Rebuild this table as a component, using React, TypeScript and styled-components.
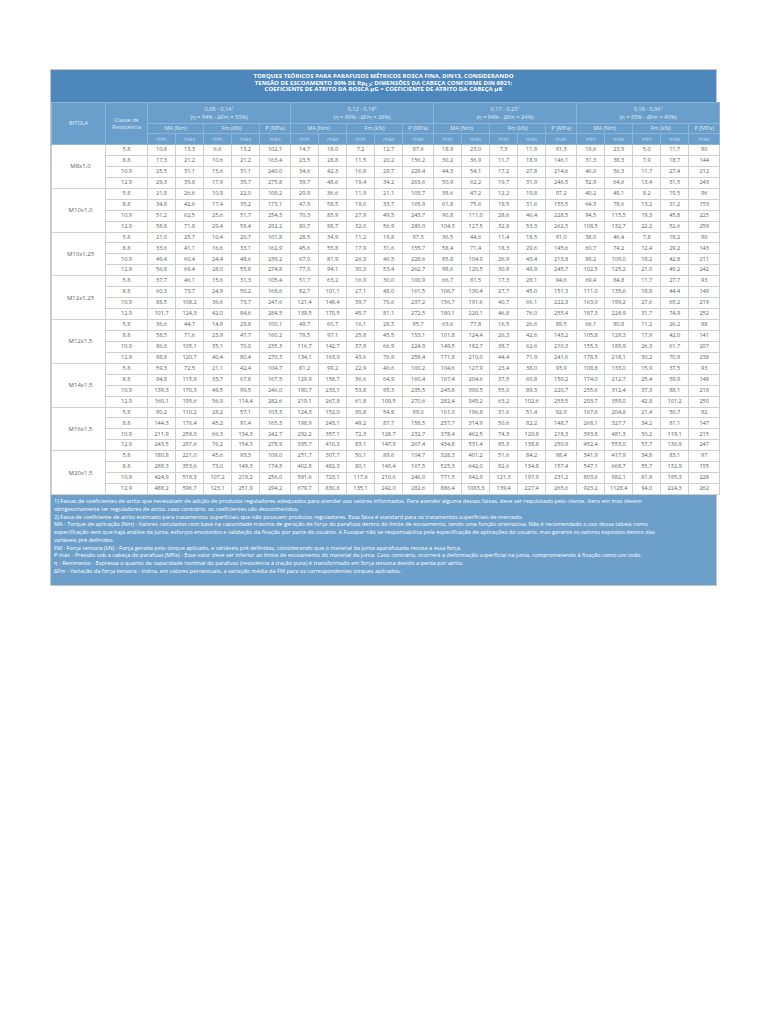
import React from 'react';
import styled, { createGlobalStyle } from 'styled-components';

const GlobalStyle = createGlobalStyle`
  html, body {
    margin: 0;
    padding: 0;
    background: #ffffff;
  }
  body {
    font-family: 'Open Sans', 'DejaVu Sans', sans-serif;
  }
`;

const Page = styled.div`
  padding: 69px 0 0 50px;
`;

const Sheet = styled.div`
  width: 667px;
  box-sizing: border-box;
  border: 1px solid #c4c7ca;
`;

const Title = styled.div`
  background: #4d87bb;
  color: #ffffff;
  font-weight: 700;
  font-size: 6px;
  line-height: 6.7px;
  text-align: center;
  height: 32px;
  box-sizing: border-box;
  padding-top: 3px;
  letter-spacing: 0.05px;

  sub {
    font-size: 4px;
    vertical-align: -1px;
    line-height: 0;
  }
`;

const Table = styled.table`
  width: 100%;
  border-collapse: collapse;
  table-layout: fixed;
`;

const Col = styled.col<{ $w: number }>`
  width: ${(p) => p.$w}px;
`;

const HeadRow = styled.tr<{ $h: number }>`
  height: ${(p) => p.$h}px;
`;

const Th = styled.th<{ $dim?: boolean }>`
  background: #6b9fcb;
  color: ${(p) => (p.$dim ? '#c9dcee' : '#dfeaf4')};
  font-weight: 400;
  font-size: 5.6px;
  line-height: 1.1;
  padding: 0;
  text-align: center;
  vertical-align: middle;
  border: 1px solid #8db6da;
  white-space: nowrap;
`;

const GroupHead = styled(Th)`
  line-height: 8px;

  sup {
    font-size: 4px;
    vertical-align: 2px;
    line-height: 0;
  }
`;

const BodyRow = styled.tr`
  height: 10.94px;
`;

const Td = styled.td`
  font-size: 5.6px;
  color: #5c5c5c;
  padding: 0;
  line-height: 1;
  text-align: center;
  vertical-align: middle;
  border: 1px solid #cfcfcf;
  white-space: nowrap;
  background: #ffffff;
`;

const SizeCell = styled(Td)`
  font-size: 6px;
  color: #606060;
  padding-left: 4px;
`;

const Notes = styled.div`
  background: #6c9fca;
  color: #ffffff;
  font-size: 5.6px;
  line-height: 7.75px;
  padding: 3px 3px 5px 3px;
  height: 90px;
  box-sizing: border-box;
`;

const Line = styled.div`
  white-space: nowrap;
`;

const groups = [
  { range: '0,08 - 0,14', note: '1', eta: '94%', dfm: '33%' },
  { range: '0,12 - 0,18', note: '2', eta: '90%', dfm: '28%' },
  { range: '0,17 - 0,23', note: '1', eta: '84%', dfm: '24%' },
  { range: '0,18 - 0,36', note: '2', eta: '83%', dfm: '40%' },
];

const classes = ['5.8', '8.8', '10.9', '12.9'];

const sizes: { name: string; rows: string[] }[] = [
  {
    name: 'M8x1,0',
    rows: [
      '10,8 13,3 6,6 13,2 102,1 14,7 18,0 7,2 12,7 97,6 18,9 23,0 7,3 11,8 91,3 19,6 23,9 5,0 11,7 90',
      '17,3 21,2 10,6 21,2 163,4 23,5 28,8 11,5 20,2 156,2 30,2 36,9 11,7 18,9 146,1 31,3 38,3 7,9 18,7 144',
      '25,5 31,1 15,6 31,1 240,0 34,6 42,3 16,8 29,7 229,4 44,3 54,1 17,2 27,8 214,6 46,0 56,3 11,7 27,4 212',
      '29,3 35,8 17,9 35,7 275,8 39,7 48,6 19,4 34,2 263,6 50,9 62,2 19,7 31,9 246,5 52,9 64,6 13,4 31,5 243',
    ],
  },
  {
    name: 'M10x1,0',
    rows: [
      '21,8 26,6 10,9 22,0 108,2 29,9 36,6 11,9 21,1 103,7 38,6 47,2 12,2 19,8 97,2 40,2 49,1 8,2 19,5 96',
      '34,8 42,6 17,4 35,2 173,1 47,9 58,5 19,0 33,7 165,9 61,8 75,6 19,5 31,6 155,5 64,3 78,6 13,2 31,2 153',
      '51,2 62,5 25,6 51,7 254,3 70,3 85,9 27,9 49,5 243,7 90,8 111,0 28,6 46,4 228,5 94,5 115,5 19,3 45,8 225',
      '58,8 71,8 29,4 59,4 292,2 80,7 98,7 32,0 56,9 280,0 104,3 127,5 32,8 53,3 262,5 108,5 132,7 22,2 52,6 259',
    ],
  },
  {
    name: 'M10x1,25',
    rows: [
      '21,0 25,7 10,4 20,7 101,8 28,5 34,9 11,2 19,8 97,3 36,5 44,6 11,4 18,5 91,0 38,0 46,4 7,8 18,2 90',
      '33,6 41,1 16,6 33,1 162,9 45,6 55,8 17,9 31,6 155,7 58,4 71,4 18,3 29,6 145,6 60,7 74,2 12,4 29,2 143',
      '49,4 60,4 24,4 48,6 239,2 67,0 81,9 26,3 46,5 228,6 85,8 104,9 26,9 43,4 213,8 89,2 109,0 18,2 42,8 211',
      '56,8 69,4 28,0 55,8 274,8 77,0 94,1 30,3 53,4 262,7 98,6 120,5 30,9 49,9 245,7 102,5 125,2 21,0 49,2 242',
    ],
  },
  {
    name: 'M12x1,25',
    rows: [
      '37,7 46,1 15,6 31,3 105,4 51,7 63,2 16,9 30,0 100,9 66,7 81,5 17,3 28,1 94,6 69,4 84,8 11,7 27,7 93',
      '60,3 73,7 24,9 50,2 168,6 82,7 101,1 27,1 48,0 161,5 106,7 130,4 27,7 45,0 151,3 111,0 135,6 18,8 44,4 149',
      '88,5 108,2 36,6 73,7 247,6 121,4 148,4 39,7 70,6 237,2 156,7 191,6 40,7 66,1 222,3 163,0 199,2 27,6 65,2 219',
      '101,7 124,3 42,0 84,6 284,5 139,5 170,5 45,7 81,1 272,5 180,1 220,1 46,8 76,0 255,4 187,3 228,9 31,7 74,9 252',
    ],
  },
  {
    name: 'M12x1,5',
    rows: [
      '36,6 44,7 14,9 29,8 100,1 49,7 60,7 16,1 28,5 95,7 63,6 77,8 16,5 26,6 89,5 66,1 80,8 11,2 26,2 88',
      '58,5 71,6 23,9 47,7 160,2 79,5 97,1 25,8 45,5 153,1 101,8 124,4 26,3 42,6 143,2 105,8 129,3 17,9 42,0 141',
      '86,0 105,1 35,1 70,0 235,3 116,7 142,7 37,9 66,9 224,9 149,5 182,7 38,7 62,6 210,3 155,3 189,9 26,3 61,7 207',
      '98,8 120,7 40,4 80,4 270,3 134,1 163,9 43,6 76,9 258,4 171,8 210,0 44,4 71,9 241,6 178,5 218,1 30,2 70,9 238',
    ],
  },
  {
    name: 'M14x1,5',
    rows: [
      '59,3 72,5 21,1 42,4 104,7 81,2 99,2 22,9 40,6 100,2 104,6 127,9 23,4 38,0 93,9 108,8 133,0 15,9 37,5 93',
      '94,8 115,9 33,7 67,8 167,5 129,9 158,7 36,6 64,9 160,4 167,4 204,6 37,5 60,8 150,2 174,0 212,7 25,4 59,9 148',
      '139,3 170,3 49,5 99,5 246,0 190,7 233,1 53,8 95,3 235,5 245,8 300,5 55,0 89,3 220,7 255,6 312,4 37,3 88,1 218',
      '160,1 195,6 56,9 114,4 282,6 219,1 267,8 61,8 109,5 270,6 282,4 345,2 63,2 102,6 253,5 293,7 359,0 42,8 101,2 250',
    ],
  },
  {
    name: 'M16x1,5',
    rows: [
      '90,2 110,2 28,2 57,1 103,3 124,3 152,0 30,8 54,8 99,0 161,0 196,8 31,6 51,4 92,9 167,6 204,8 21,4 50,7 92',
      '144,3 176,4 45,2 91,4 165,3 198,9 243,1 49,2 87,7 158,5 257,7 314,9 50,6 82,2 148,7 268,1 327,7 34,2 81,1 147',
      '211,9 259,0 66,3 134,3 242,7 292,2 357,1 72,3 128,7 232,7 378,4 462,5 74,3 120,8 218,3 393,8 481,3 50,2 119,1 215',
      '243,5 297,6 76,2 154,3 278,9 335,7 410,3 83,1 147,9 267,4 434,8 531,4 85,3 138,8 250,9 452,4 553,0 57,7 136,9 247',
    ],
  },
  {
    name: 'M20x1,5',
    rows: [
      '180,8 221,0 45,6 93,3 109,0 251,7 307,7 50,1 89,6 104,7 328,3 401,2 51,6 84,2 98,4 341,9 417,9 34,8 83,1 97',
      '289,3 353,6 73,0 149,3 174,3 402,8 492,3 80,1 143,4 167,5 525,3 642,0 82,6 134,8 157,4 547,1 668,7 55,7 132,9 155',
      '424,9 519,3 107,2 219,2 256,0 591,6 723,1 117,6 210,6 246,0 771,5 942,9 121,3 197,9 231,2 803,6 982,1 81,8 195,3 228',
      '488,2 596,7 123,1 251,9 294,2 679,7 830,8 135,1 242,0 282,6 886,4 1083,3 139,4 227,4 265,6 923,2 1128,4 94,0 224,3 262',
    ],
  },
];

const notes = [
  '1) Faixas de coeficientes de atrito que necessitam de adição de produtos reguladores adequados para atender aos valores informados. Para atender alguma dessas faixas, deve ser requisitado pelo cliente. Itens em inox devem',
  'obrigatoriamente ter reguladores de atrito, caso contrário, os coeficientes são desconhecidos.',
  '2) Faixa de coeficiente de atrito estimado para tratamentos superficiais que não possuem produtos reguladores. Essa faixa é standard para os tratamentos superficiais de mercado.',
  'MA - Torque de aplicação (Nm) - Valores calculados com base na capacidade máxima de geração de força do parafuso dentro do limite de escoamento, tendo uma função orientativa. Não é recomendado o uso dessa tabela como',
  'especificação sem que haja análise da junta, esforços envolvidos e validação da fixação por parte do usuário. A Fusopar não se responsabiliza pela especificação de aplicações do usuário, mas garante os valores expostos dentro das',
  'variáveis pré definidas.',
  'FM - Força tensora (kN) - Força gerada pelo torque aplicado, e váriáveis pré definidas, considerando que o material da junta aparafusada resista a essa força.',
  'P máx - Pressão sob a cabeça do parafuso (MPa) - Esse valor deve ser inferior ao limite de escoamento do material da junta. Caso contrário, ocorrerá a deformação superficial na junta, comprometendo à fixação como um todo.',
  'η - Renimento - Expressa o quanto da capacidade nominal do parafuso (resistência à tração pura) é transformado em força tensora devido a perda por atrito.',
  'ΔFm - Variação da força tensora - Indica, em valores percentuais, a variação média da FM para os correspondentes torques aplicados.',
];

const groupCols = [28, 28, 28, 28, 31];

export default function App() {
  return (
    <>
      <GlobalStyle />
      <Page>
        <Sheet>
          <Title>
            <div>TORQUES TEÓRICOS PARA PARAFUSOS MÉTRICOS ROSCA FINA, DIN13, CONSIDERANDO</div>
            <div>
              TENSÃO DE ESCOAMENTO 90% DE Rp<sub>0,2</sub>; DIMENSÕES DA CABEÇA CONFORME DIN 6921;
            </div>
            <div>COEFICIENTE DE ATRITO DA ROSCA µG = COEFICIENTE DE ATRITO DA CABEÇA µK</div>
          </Title>
          <Table>
            <colgroup>
              <Col $w={54} />
              <Col $w={42} />
              {groups.map((g) =>
                groupCols.map((w, i) => <Col key={g.range + i} $w={w} />)
              )}
            </colgroup>
            <thead>
              <HeadRow $h={21}>
                <Th rowSpan={3}>BITOLA</Th>
                <Th rowSpan={3}>
                  Classe de
                  <br />
                  Resistência
                </Th>
                {groups.map((g) => (
                  <GroupHead key={g.range} colSpan={5}>
                    {g.range}
                    <sup>{g.note}</sup>
                    <br />
                    (η = {g.eta} - ΔFm = {g.dfm})
                  </GroupHead>
                ))}
              </HeadRow>
              <HeadRow $h={10}>
                {groups.map((g) => (
                  <React.Fragment key={g.range}>
                    <Th colSpan={2}>MA (Nm)</Th>
                    <Th colSpan={2}>Fm (kN)</Th>
                    <Th>P (MPa)</Th>
                  </React.Fragment>
                ))}
              </HeadRow>
              <HeadRow $h={11}>
                {groups.map((g) => (
                  <React.Fragment key={g.range}>
                    <Th $dim>min</Th>
                    <Th $dim>máx</Th>
                    <Th $dim>min</Th>
                    <Th $dim>máx</Th>
                    <Th $dim>máx</Th>
                  </React.Fragment>
                ))}
              </HeadRow>
            </thead>
            <tbody>
              {sizes.map((s) =>
                s.rows.map((r, ri) => (
                  <BodyRow key={s.name + ri}>
                    {ri === 0 && <SizeCell rowSpan={4}>{s.name}</SizeCell>}
                    <Td>{classes[ri]}</Td>
                    {r.split(' ').map((v, vi) => (
                      <Td key={vi}>{v}</Td>
                    ))}
                  </BodyRow>
                ))
              )}
            </tbody>
          </Table>
          <Notes>
            {notes.map((n, i) => (
              <Line key={i}>{n}</Line>
            ))}
          </Notes>
        </Sheet>
      </Page>
    </>
  );
}
